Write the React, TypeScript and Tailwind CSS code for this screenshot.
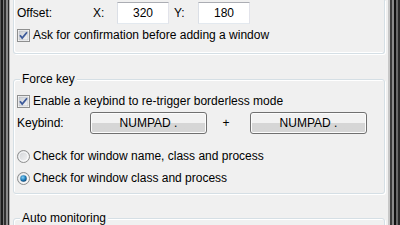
import React from 'react';

const Checkbox: React.FC = () => (
  <svg width="13" height="13" viewBox="0 0 13 13" className="shrink-0">
    <defs>
      <linearGradient id="cbg" x1="0" y1="0" x2="1" y2="1">
        <stop offset="0" stopColor="#cbcfd5" />
        <stop offset="1" stopColor="#f6f6f6" />
      </linearGradient>
    </defs>
    <rect x="0.5" y="0.5" width="12" height="12" fill="#fff" stroke="#8e8f8f" />
    <rect x="2" y="2" width="9" height="9" fill="url(#cbg)" stroke="#aeb3b9" strokeWidth="0.6" />
    <path d="M3 6.2 L5.2 9 L10 3.2" fill="none" stroke="#3d5a9a" strokeWidth="1.8" />
  </svg>
);

const Radio: React.FC<{ checked?: boolean }> = ({ checked }) => (
  <svg width="13" height="13" viewBox="0 0 13 13" className="shrink-0">
    <defs>
      <radialGradient id="rdot" cx="0.4" cy="0.35" r="0.7">
        <stop offset="0" stopColor="#8ad2f7" />
        <stop offset="0.6" stopColor="#1b7ab8" />
        <stop offset="1" stopColor="#0c3f6b" />
      </radialGradient>
      <linearGradient id="rbg" x1="0" y1="0" x2="1" y2="1">
        <stop offset="0" stopColor="#cdd0d4" />
        <stop offset="1" stopColor="#f7f7f7" />
      </linearGradient>
    </defs>
    <circle cx="6.5" cy="6.5" r="6" fill="url(#rbg)" stroke="#8e8f8f" />
    <circle cx="6.5" cy="6.5" r="4.5" fill="none" stroke="#fff" strokeWidth="0.8" />
    {checked && <circle cx="6.5" cy="6.5" r="3.2" fill="url(#rdot)" />}
  </svg>
);

const NumInput: React.FC<{ value: string }> = ({ value }) => (
  <div className="flex h-[22px] w-[52px] items-center justify-center border border-[#abadb3] border-b-[#e3e9ef] border-l-[#dbdfe6] border-r-[#e2e3ea] bg-white">
    {value}
  </div>
);

const KeyButton: React.FC<{ label: string }> = ({ label }) => (
  <div className="flex h-[22px] w-[117px] items-center justify-center rounded-[3px] border border-[#707070] bg-gradient-to-b from-[#f2f2f2] from-50% to-[#d6d6d6] to-50% shadow-[inset_0_0_0_1px_#fcfcfc]">
    {label}
  </div>
);

const GroupTitle: React.FC<{ text: string }> = ({ text }) => (
  <div className="absolute left-[6px] top-[-8px] bg-[#f0f0f0] px-[2px] leading-[14px]">{text}</div>
);

const App: React.FC = () => {
  return (
    <div className="flex h-[225px] w-[400px] overflow-hidden bg-[#f0f0f0] font-['Liberation_Sans',Arial,sans-serif] text-[12px] text-black">
      {/* left window frame */}
      <div className="flex h-full shrink-0">
        <div className="w-[1px] bg-[#5a5a5a]" />
        <div className="w-[2px] bg-[#1c1c1c]" />
        <div className="w-[1px] bg-[#7c7c7c]" />
        <div className="w-[2px] bg-[#303030]" />
        <div className="w-[2px] bg-[#8a8a8a]" />
        <div className="w-[1px] bg-[#2a2a2a]" />
        <div className="w-[1px] bg-[#b0b0b0]" />
      </div>

      <div className="flex min-w-0 flex-1 flex-col pl-[3px] pr-[3px]">
        {/* window placement group (top cut off) */}
        <div className="flex h-[54px] shrink-0 flex-col rounded-b-[3px] border-x border-b border-[#d5dfe5] pl-[3px] pt-[2px] shadow-[1px_1px_0_#fff,inset_1px_-1px_0_#fff]">
          <div className="flex h-[22px] items-center">
            <div className="w-[76px]">Offset:</div>
            <div className="w-[24px]">X:</div>
            <NumInput value="320" />
            <div className="ml-[5px] w-[24px]">Y:</div>
            <NumInput value="180" />
          </div>
          <div className="flex h-[22px] items-center gap-[3px]">
            <Checkbox />
            <span>Ask for confirmation before adding a window</span>
          </div>
        </div>

        {/* Force key */}
        <div className="relative mt-[25px] flex h-[115px] shrink-0 flex-col rounded-[3px] border border-[#d5dfe5] pl-[3px] pt-[10px] shadow-[1px_1px_0_#fff,inset_1px_1px_0_#fff]">
          <GroupTitle text="Force key" />
          <div className="flex h-[22px] items-center gap-[3px]">
            <Checkbox />
            <span>Enable a keybind to re-trigger borderless mode</span>
          </div>
          <div className="flex h-[22px] items-center">
            <div className="w-[73px]">Keybind:</div>
            <KeyButton label="NUMPAD ." />
            <div className="w-[43px] pr-[5px] text-center">+</div>
            <KeyButton label="NUMPAD ." />
          </div>
          <div className="mt-[11px] flex h-[22px] items-center gap-[3px]">
            <Radio />
            <span>Check for window name, class and process</span>
          </div>
          <div className="flex h-[22px] items-center gap-[3px]">
            <Radio checked />
            <span>Check for window class and process</span>
          </div>
        </div>

        {/* Auto monitoring */}
        <div className="relative mt-[24px] h-[40px] shrink-0 rounded-[3px] border border-[#d5dfe5] shadow-[1px_1px_0_#fff,inset_1px_1px_0_#fff]">
          <GroupTitle text="Auto monitoring" />
        </div>
      </div>

      {/* right window frame */}
      <div className="flex h-full shrink-0">
        <div className="w-[2px] bg-[#c8c8c8]" />
        <div className="w-[2px] bg-[#3c3c3c]" />
        <div className="w-[2px] bg-[#8a8a8a]" />
        <div className="w-[2px] bg-[#111111]" />
        <div className="w-[2px] bg-[#6a6a6a]" />
        <div className="w-[2px] bg-[#2a2a2a]" />
      </div>
    </div>
  );
};

export default App;
